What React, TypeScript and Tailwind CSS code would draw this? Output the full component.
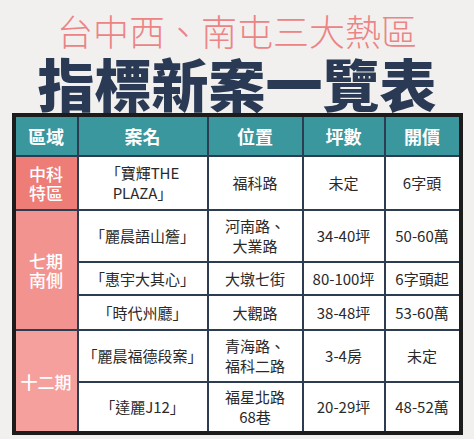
import React from 'react';

const font = { fontFamily: '"Noto Sans CJK TC", "Noto Sans", sans-serif' };

const Cell = ({ children, className = '' }: { children: React.ReactNode; className?: string }) => (
    <div className={`flex items-center justify-center bg-white text-center text-[15px] leading-[20px] text-[#2a2a2a] ${className}`}>
        {children}
    </div>
);

const Zone = ({ children, className = '' }: { children: React.ReactNode; className?: string }) => (
    <div className={`flex items-center justify-center text-center text-[17px] font-medium leading-[19px] text-white ${className}`}>
        {children}
    </div>
);

const Head = ({ children }: { children: React.ReactNode }) => (
    <div className="flex items-center justify-center bg-[#3a979e] text-[18px] font-bold text-white">{children}</div>
);

const App = () => {
    return (
        <div className="w-[474px] h-[439px] bg-[#f1f0ee] flex flex-col items-center overflow-hidden" style={font}>
            {/* Titles */}
            <div className="mt-[10px] h-[40px] text-[36px] leading-[40px] font-light text-[#ec8486]">
                台中西、南屯三大熱區
            </div>
            <div className="mt-[4px] h-[57px] text-[57px] leading-[57px] font-black text-[#2b3a54]">
                指標新案一覽表
            </div>

            {/* Table */}
            <div className="mt-[2px] border-[4px] border-[#1c1c1c] bg-[#2c3d52]">
                <div className="grid grid-cols-[61px_128px_93px_80px_73px] grid-rows-[38px_52px_50px_31px_33px_50px_48px] gap-[2px]">
                    <Head>區域</Head>
                    <Head>案名</Head>
                    <Head>位置</Head>
                    <Head>坪數</Head>
                    <Head>開價</Head>

                    <Zone className="bg-[#ee7d77]">中科<br />特區</Zone>
                    <Cell>「寶輝THE<br />PLAZA」</Cell>
                    <Cell>福科路</Cell>
                    <Cell>未定</Cell>
                    <Cell>6字頭</Cell>

                    <Zone className="row-span-3 bg-[#f39390]">七期<br />南側</Zone>
                    <Cell>「麗晨語山簷」</Cell>
                    <Cell>河南路、<br />大業路</Cell>
                    <Cell>34-40坪</Cell>
                    <Cell>50-60萬</Cell>

                    <Cell>「惠宇大其心」</Cell>
                    <Cell>大墩七街</Cell>
                    <Cell>80-100坪</Cell>
                    <Cell>6字頭起</Cell>

                    <Cell>「時代州廳」</Cell>
                    <Cell>大觀路</Cell>
                    <Cell>38-48坪</Cell>
                    <Cell>53-60萬</Cell>

                    <Zone className="row-span-2 bg-[#f5a09d]">十二期</Zone>
                    <Cell>「麗晨福德段案」</Cell>
                    <Cell>青海路、<br />福科二路</Cell>
                    <Cell>3-4房</Cell>
                    <Cell>未定</Cell>

                    <Cell>「達麗J12」</Cell>
                    <Cell>福星北路<br />68巷</Cell>
                    <Cell>20-29坪</Cell>
                    <Cell>48-52萬</Cell>
                </div>
            </div>
        </div>
    );
};

export default App;
